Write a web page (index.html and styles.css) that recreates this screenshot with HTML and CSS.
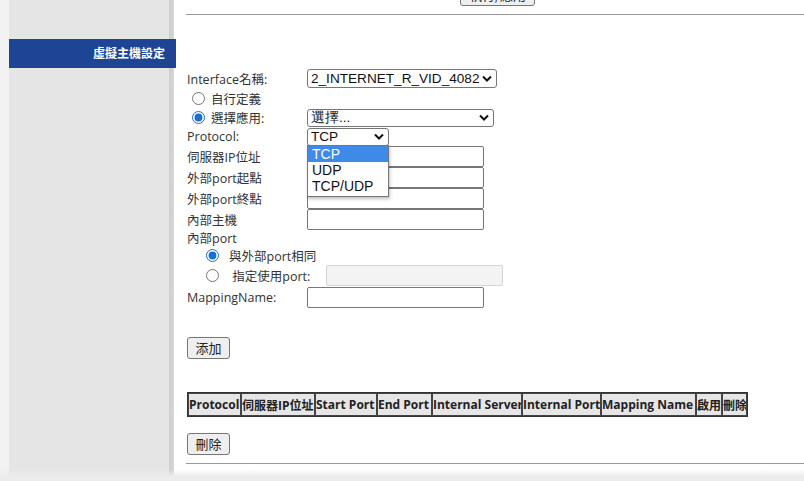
FILE: index.html
```html
<!DOCTYPE html>
<html>
<head>
<meta http-equiv="Content-Type" content="text/html;charset=UTF-8">
<link rel="stylesheet" href="styles.css">
</head>
<body>
<div class="page">
  <div class="sidebar">
    <div class="menuItem">虛擬主機設定</div>
  </div>
  <div class="content">
    <div class="topBar">
      <button class="btn applyBtn">執行/應用</button>
    </div>
    <hr class="line">
    <div class="form">
      <div class="row r1">
        <span class="label">Interface名稱:</span>
        <select class="sel selIface"><option>2_INTERNET_R_VID_4082</option></select>
      </div>
      <div class="row r2">
        <label class="radioLabel"><input type="radio" name="mode"> 自行定義</label>
      </div>
      <div class="row r3">
        <label class="radioLabel label"><input type="radio" name="mode" checked> 選擇應用:</label>
        <select class="sel selApp"><option>選擇...</option></select>
      </div>
      <div class="row r4">
        <span class="label">Protocol:</span>
        <div class="protoWrap">
          <select class="sel selProto"><option>TCP</option></select>
          <div class="dropList">
            <div class="opt active">TCP</div>
            <div class="opt">UDP</div>
            <div class="opt">TCP/UDP</div>
          </div>
        </div>
      </div>
      <div class="row r5">
        <span class="label">伺服器IP位址</span>
        <input class="txt" type="text">
      </div>
      <div class="row r5">
        <span class="label">外部port起點</span>
        <input class="txt" type="text">
      </div>
      <div class="row r5">
        <span class="label">外部port終點</span>
        <input class="txt" type="text">
      </div>
      <div class="row r6">
        <span class="label">內部主機</span>
        <input class="txt" type="text">
      </div>
      <div class="row r7">
        <span class="label">內部port</span>
      </div>
      <div class="row r8 indent">
        <label class="radioLabel"><input type="radio" name="port" checked> 與外部port相同</label>
      </div>
      <div class="row r9 indent">
        <label class="radioLabel portLabel"><input type="radio" name="port"> &nbsp;指定使用port:</label>
        <input class="txt txtDisabled" type="text" disabled>
      </div>
      <div class="row r9">
        <span class="label">MappingName:</span>
        <input class="txt" type="text">
      </div>
    </div>
    <button class="btn addBtn">添加</button>
    <table class="ruleTable" cellspacing="0">
      <tr>
        <th style="width:51px">Protocol</th>
        <th style="width:72px">伺服器IP位址</th>
        <th style="width:60px">Start Port</th>
        <th style="width:53px">End Port</th>
        <th style="width:88px">Internal Server</th>
        <th style="width:77px">Internal Port</th>
        <th style="width:93px">Mapping Name</th>
        <th style="width:24px">啟用</th>
        <th style="width:23px">刪除</th>
      </tr>
    </table>
    <button class="btn delBtn">刪除</button>
    <hr class="line bottomLine">
  </div>
</div>
<div class="footer"></div>
</body>
</html>
```
FILE: styles.css
```css
html, body{
  margin: 0;
  padding: 0;
  height: 481px;
  overflow: hidden;
  background: #fff;
  font-family: "Open Sans", "Noto Sans CJK TC", sans-serif;
  font-size: 12.5px;
  color: #333;
}
.page{
  display: flex;
  height: 481px;
}
.sidebar{
  width: 175px;
  flex: none;
  padding-top: 39px;
  box-sizing: border-box;
  background: linear-gradient(to right, #f2f2f2 0, #f2f2f2 9px, #e5e5e5 9px, #e5e5e5 169px, #cdcdcd 169px, #d6d6d6 174px, #fff 174px);
}
.menuItem{
  margin-left: 9px;
  width: 167px;
  height: 29px;
  line-height: 30px;
  background-color: #1e4595;
  color: #fff;
  font-weight: bold;
  font-size: 12px;
  text-align: right;
  padding-right: 11px;
  box-sizing: border-box;
}
.content{
  flex: 1;
  padding-left: 12px;
  min-width: 0;
}
.topBar{
  height: 14px;
  position: relative;
}
.btn{
  font-family: "Noto Sans CJK TC", sans-serif;
  font-size: 13px;
  color: #222;
  background: #efefef;
  border: 1px solid #767676;
  border-radius: 3px;
  height: 22px;
  padding: 0 5px;
  line-height: 18px;
}
.applyBtn{
  position: absolute;
  left: 273px;
  top: -16px;
  width: 75px;
}
.line{
  margin: 0 0 0 -1px;
  border: 0;
  border-top: 1px solid #9a9a9a;
}
.form{
  margin-top: 53px;
}
.row{
  display: flex;
  align-items: center;
}
.label{
  width: 120px;
  flex: none;
  white-space: nowrap;
}
.r1{ height: 21px; }
.r2{ height: 19px; }
.r3{ height: 19px; }
.r4{ height: 19px; }
.r5{ height: 21px; }
.r6{ height: 20px; }
.r7{ height: 17px; }
.r8{ height: 18px; }
.r9{ height: 22px; }
.radioLabel{
  display: flex;
  align-items: center;
  white-space: nowrap;
}
.radioLabel input{
  margin: 0 6px 0 5px;
  width: 13px;
  height: 13px;
  accent-color: #1a6fd6;
}
.indent .radioLabel input{
  margin-left: 19px;
  margin-right: 10px;
}
.portLabel{
  width: 139px;
}
.sel{
  -webkit-appearance: none;
  appearance: none;
  font-family: "Liberation Sans", Arial, sans-serif;
  font-size: 13.6px;
  color: #111;
  background: #fff url("data:image/svg+xml,%3Csvg xmlns='http://www.w3.org/2000/svg' width='10' height='7'%3E%3Cpath d='M1 1.5l4 4 4-4' fill='none' stroke='%23111' stroke-width='2'/%3E%3C/svg%3E") no-repeat right 4px center;
  border: 1px solid #767676;
  border-radius: 3px;
  padding: 0 0 0 3px;
  box-sizing: border-box;
  line-height: 16px;
}
.selIface{
  width: 190px;
  height: 19px;
}
.selApp{
  width: 187px;
  height: 18px;
}
.selProto{
  width: 82px;
  height: 18px;
}
.protoWrap{
  position: relative;
  height: 18px;
}
.dropList{
  position: absolute;
  left: 0;
  top: 17px;
  width: 82px;
  background: #fff;
  border: 1px solid #767676;
  box-sizing: border-box;
  box-shadow: 1px 2px 3px rgba(0,0,0,0.25);
  padding-bottom: 2px;
  z-index: 2;
  font-family: "Liberation Sans", Arial, sans-serif;
  font-size: 14px;
  color: #111;
}
.opt{
  height: 16px;
  line-height: 16px;
  padding-left: 4px;
}
.opt.active{
  background: #3d8ae8;
  color: #fff;
}
.txt{
  width: 177px;
  height: 21px;
  box-sizing: border-box;
  border: 1px solid #767676;
  border-radius: 2px;
  background: #fff;
  margin: 0;
}
.txtDisabled{
  background: #f3f3f3;
  border-color: #d4d4d4;
}
.addBtn{
  margin-top: 29px;
  display: block;
  width: 43px;
  height: 22px;
}
.ruleTable{
  margin-top: 33px;
  width: 561px;
  border: 1px solid #333;
  border-collapse: separate;
  table-layout: fixed;
}
.ruleTable th{
  border: 1px solid #444;
  background: #e6e6e6;
  height: 21px;
  padding: 0;
  font-size: 12px;
  font-weight: bold;
  color: #222;
  white-space: nowrap;
  text-align: left;
  overflow: hidden;
}
.delBtn{
  margin-top: 16px;
  display: block;
  width: 43px;
  height: 22px;
}
.bottomLine{
  margin-top: 8px;
}
.footer{
  position: absolute;
  left: 0;
  right: 0;
  bottom: 0;
  height: 12px;
  background: linear-gradient(to bottom, rgba(240,240,240,0), #ececec 60%);
}
```
